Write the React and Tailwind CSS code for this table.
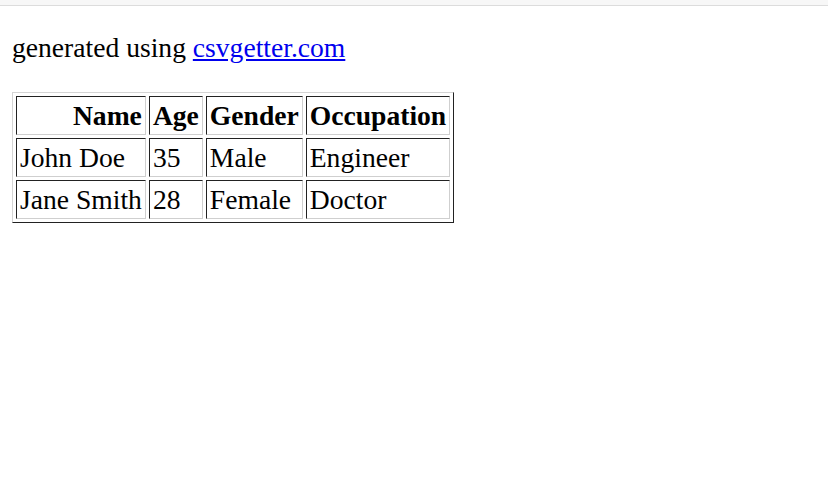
import React from 'react';

const rows = [
  ['John Doe', '35', 'Male', 'Engineer'],
  ['Jane Smith', '28', 'Female', 'Doctor'],
];

const cell = 'border border-t-[#222] border-l-[#222] border-b-[#cfcfcf] border-r-[#cfcfcf] px-[3px] py-[3px] leading-[31px]';

export default function App() {
  return (
    <div className="min-h-screen bg-white text-black font-['Liberation_Serif','Times_New_Roman',serif] text-[27.6px]">
      <div className="h-[6px] bg-[#f7f7f7] border-b border-[#dcdcdc]" />
      <div className="px-[12px]">
        <p className="mt-[26px] mb-[29px] leading-[31px]">
          generated using <a href="#" className="text-[#0000ee] underline">csvgetter.com</a>
        </p>
        <table className="border-separate border-spacing-[3px] border border-t-[#d4d4d4] border-l-[#d4d4d4] border-b-[#222] border-r-[#222]">
          <thead>
            <tr>
              {['Name', 'Age', 'Gender', 'Occupation'].map((h) => (
                <th key={h} className={`${cell} text-right font-bold`}>{h}</th>
              ))}
            </tr>
          </thead>
          <tbody>
            {rows.map((r) => (
              <tr key={r[0]}>
                {r.map((c, i) => (
                  <td key={i} className={`${cell} text-left`}>{c}</td>
                ))}
              </tr>
            ))}
          </tbody>
        </table>
      </div>
    </div>
  );
}
